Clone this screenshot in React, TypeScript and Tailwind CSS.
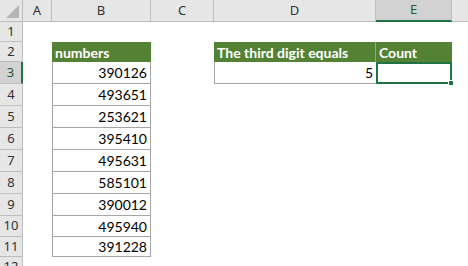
import React from 'react';

const colHeaders = [
  { key: 'A', w: 'w-[29px]' },
  { key: 'B', w: 'w-[99px]' },
  { key: 'C', w: 'w-[63px]' },
  { key: 'D', w: 'w-[162px]' },
  { key: 'E', w: 'w-[76px]' },
  { key: '', w: 'w-[40px]' },
];

const numbers = ['390126', '493651', '253621', '395410', '495631', '585101', '390012', '495940', '391228'];

// row heights as read off the screenshot
const rowHeights = ['h-[20px]', 'h-[20px]', 'h-[22px]', 'h-[22px]', 'h-[22px]', 'h-[22px]', 'h-[22px]', 'h-[22px]', 'h-[22px]', 'h-[21px]', 'h-[20px]', 'h-[20px]'];

const Cell = ({ className = '', children }: { className?: string; children?: React.ReactNode }) => (
  <div className={`h-full shrink-0 box-border flex items-center font-['Lato','Noto_Sans',sans-serif] text-[14px] ${className}`}>
    {children}
  </div>
);

const App = () => {
  return (
    <div className="w-[468px] h-[266px] overflow-hidden bg-white font-['Noto_Sans',sans-serif]">
      {/* column headers */}
      <div className="flex h-[22px]">
        <div className="w-[23px] h-full shrink-0 box-border bg-[#e6e6e6] border-r border-b border-[#bdbdbd] relative">
          <div className="absolute right-[3px] bottom-[3px] w-0 h-0 border-l-[13px] border-l-transparent border-b-[13px] border-b-[#b5b5b5]" />
        </div>
        {colHeaders.map((c, i) =>
          c.key === 'E' ? (
            <div
              key={i}
              className={`${c.w} h-full shrink-0 box-border bg-[#d2d2d2] border-r border-[#bdbdbd] border-b-2 border-b-[#217346] flex items-center justify-center text-[13px] text-[#1e5e3a]`}
            >
              {c.key}
            </div>
          ) : (
            <div
              key={i}
              className={`${c.w} h-full shrink-0 box-border bg-[#e6e6e6] border-r border-b border-[#bdbdbd] flex items-center justify-center text-[13px] text-[#333]`}
            >
              {c.key}
            </div>
          )
        )}
      </div>

      {rowHeights.map((h, i) => {
        const r = i + 1;
        const active = r === 3;
        return (
          <div key={r} className={`flex ${h}`}>
            <div
              className={`w-[23px] h-full shrink-0 box-border border-b border-[#bdbdbd] flex items-center justify-center text-[13px] ${
                active ? 'bg-[#d2d2d2] border-r-2 border-r-[#217346] text-[#1e5e3a]' : 'bg-[#e6e6e6] border-r text-[#333]'
              }`}
            >
              {r}
            </div>
            <Cell className="w-[29px]" />
            {/* column B */}
            {r === 2 ? (
              <Cell className="w-[99px] bg-[#548235] text-white font-bold pl-[3px]">numbers</Cell>
            ) : r >= 3 && r <= 11 ? (
              <Cell className="w-[99px] border-x border-b border-[#a6a6a6] justify-end pr-[3px] text-black">
                {numbers[r - 3]}
              </Cell>
            ) : (
              <Cell className="w-[99px]" />
            )}
            <Cell className="w-[63px]" />
            {/* columns D & E */}
            {r === 2 ? (
              <>
                <Cell className="w-[162px] bg-[#548235] border-r border-[#8fa879] text-white font-bold pl-[3px]">
                  The third digit equals
                </Cell>
                <Cell className="w-[76px] bg-[#548235] text-white font-bold pl-[3px]">Count</Cell>
              </>
            ) : r === 3 ? (
              <>
                <Cell className="w-[162px] border-l border-b border-[#a6a6a6] justify-end pr-[3px] text-black">5</Cell>
                <Cell className="w-[76px] relative border-2 border-[#217346]">
                  <div className="absolute right-[-4px] bottom-[-4px] w-[6px] h-[6px] bg-[#217346] border border-white" />
                </Cell>
              </>
            ) : (
              <>
                <Cell className="w-[162px]" />
                <Cell className="w-[76px]" />
              </>
            )}
            <Cell className="w-[40px]" />
          </div>
        );
      })}
    </div>
  );
};

export default App;
